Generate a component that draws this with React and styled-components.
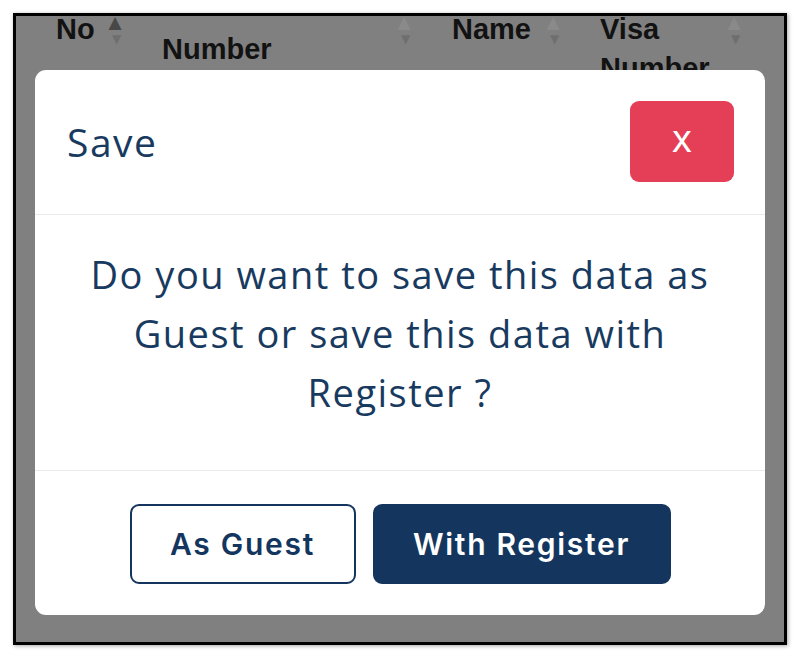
import styled, { createGlobalStyle } from "styled-components";

const GlobalStyle = createGlobalStyle`
  * { box-sizing: border-box; }
  html, body {
    margin: 0;
    padding: 0;
    background: #ffffff;
  }
`;

const Frame = styled.div`
  position: relative;
  margin: 13px;
  width: 774px;
  height: 632px;
  border: 3px solid #000;
  background: #808080;
  overflow: hidden;
  box-shadow: 1px 1px 4px rgba(0, 0, 0, 0.35);
`;

const HeaderRow = styled.div`
  display: flex;
  margin-top: -6px;
  font-family: "Liberation Sans", Arial, sans-serif;
  font-weight: 700;
  font-size: 29px;
  line-height: 39px;
  color: #121212;
`;

const HeaderCell = styled.div`
  display: flex;
  justify-content: space-between;
  width: ${(p) => p.$width}px;
  padding-left: ${(p) => p.$left}px;
  padding-right: ${(p) => p.$right}px;
`;

const HeaderText = styled.div`
  padding-top: ${(p) => p.$top}px;
`;

const SortArrows = styled.div`
  display: flex;
  flex-direction: column;
  align-items: center;
  width: 18px;
  padding-top: 4px;
  font-family: "DejaVu Sans", sans-serif;
  font-weight: 400;
  line-height: 17px;
`;

const ArrowUp = styled.span`
  font-size: 17px;
  color: ${(p) => (p.$active ? "#484848" : "#8a8a8a")};
`;

const ArrowDown = styled.span`
  font-size: 12px;
  color: #6f6f6f;
  margin-left: 3px;
`;

const Modal = styled.div`
  position: absolute;
  left: 19px;
  right: 19px;
  top: 54px;
  background: #fff;
  border-radius: 11px;
  font-family: "Open Sans", Lato, sans-serif;
  color: #193a5f;
`;

const ModalHeader = styled.div`
  display: flex;
  justify-content: space-between;
  align-items: center;
  padding: 31px 31px 32px 32px;
  border-bottom: 1.5px solid #e8eaee;
`;

const Title = styled.h2`
  margin: 0;
  font-size: 39px;
  font-weight: 400;
  letter-spacing: 1.5px;
`;

const CloseButton = styled.button`
  width: 104px;
  height: 81px;
  border: none;
  border-radius: 9px;
  background: #e53f57;
  color: #fff;
  font-family: Inter, Roboto, sans-serif;
  font-size: 29px;
  font-weight: 500;
`;

const ModalBody = styled.div`
  padding: 30px 30px 48px;
  text-align: center;
  font-size: 38px;
  line-height: 59px;
  letter-spacing: 1.5px;
  border-bottom: 1.5px solid #e8eaee;
`;

const Message = styled.p`
  margin: 0 auto;
  max-width: 660px;
`;

const ModalFooter = styled.div`
  display: flex;
  justify-content: center;
  gap: 17px;
  padding: 33px 0 31px;
`;

const FooterButton = styled.button`
  height: 80px;
  width: ${(p) => p.$width}px;
  border: 2px solid #14365e;
  border-radius: 9px;
  background: ${(p) => (p.$filled ? "#14365e" : "#fff")};
  color: ${(p) => (p.$filled ? "#fff" : "#14365e")};
  font-family: Inter, Roboto, sans-serif;
  font-size: 30px;
  font-weight: 600;
  letter-spacing: 1.7px;
`;

const columns = [
  { label: "No", width: 114, left: 40, right: 6, top: 0, active: true },
  { label: "Number", width: 290, left: 32, right: 7, top: 20 },
  { label: "Name", width: 148, left: 32, right: 6, top: 0 },
  { label: ["Visa", <br key="b" />, "Number"], width: 215, left: 32, right: 40, top: 0 },
];

export default function App() {
  return (
    <>
      <GlobalStyle />
      <Frame>
        <HeaderRow>
          {columns.map((c, i) => (
            <HeaderCell key={i} $width={c.width} $left={c.left} $right={c.right}>
              <HeaderText $top={c.top}>{c.label}</HeaderText>
              <SortArrows>
                <ArrowUp $active={c.active}>▲</ArrowUp>
                <ArrowDown>▼</ArrowDown>
              </SortArrows>
            </HeaderCell>
          ))}
        </HeaderRow>

        <Modal>
          <ModalHeader>
            <Title>Save</Title>
            <CloseButton>X</CloseButton>
          </ModalHeader>
          <ModalBody>
            <Message>
              Do you want to save this data as Guest or save this data with Register ?
            </Message>
          </ModalBody>
          <ModalFooter>
            <FooterButton $width={226}>As Guest</FooterButton>
            <FooterButton $width={298} $filled>With Register</FooterButton>
          </ModalFooter>
        </Modal>
      </Frame>
    </>
  );
}
